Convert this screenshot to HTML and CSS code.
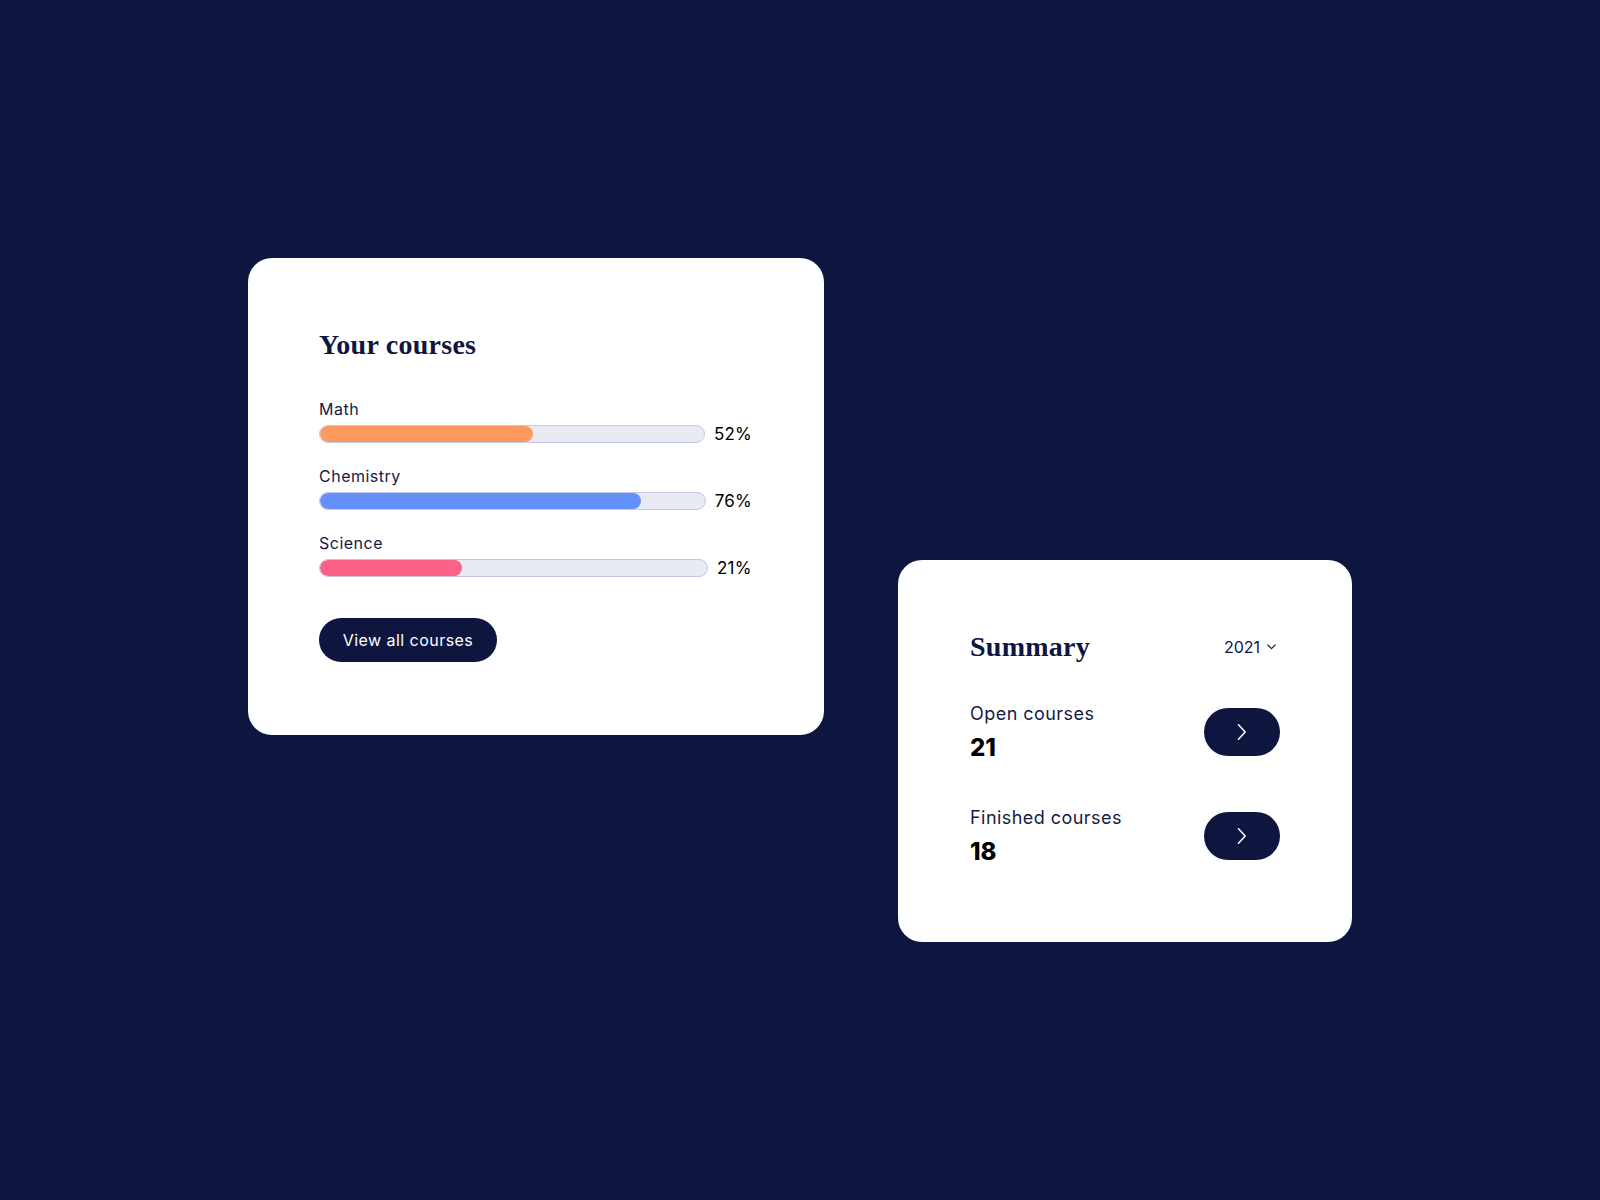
FILE: index.html
```html
<!DOCTYPE html>
<html lang="en">
<head>
<meta charset="utf-8">
<title>Courses dashboard</title>
<link rel="stylesheet" href="styles.css">
</head>
<body>
<main class="canvas">
  <section class="card courses">
    <h2 class="card-title">Your courses</h2>
    <ul class="course-list">
      <li class="course">
        <span class="course-name">Math</span>
        <div class="progress-row">
          <div class="track"><div class="fill fill-orange" style="width:213px"></div></div>
          <span class="pct">52%</span>
        </div>
      </li>
      <li class="course">
        <span class="course-name">Chemistry</span>
        <div class="progress-row">
          <div class="track"><div class="fill fill-blue" style="width:321px"></div></div>
          <span class="pct">76%</span>
        </div>
      </li>
      <li class="course">
        <span class="course-name">Science</span>
        <div class="progress-row">
          <div class="track"><div class="fill fill-pink" style="width:142px"></div></div>
          <span class="pct">21%</span>
        </div>
      </li>
    </ul>
    <button class="btn-primary" type="button">View all courses</button>
  </section>

  <section class="card summary">
    <header class="summary-head">
      <h2 class="card-title">Summary</h2>
      <button class="year-select" type="button">2021
        <svg class="year-chev" width="9" height="6" viewBox="0 0 9 6" aria-hidden="true"><path d="M0.8 1 L4.5 4.6 L8.2 1" fill="none" stroke="#0e1640" stroke-width="1.1" stroke-linecap="round" stroke-linejoin="round"/></svg>
      </button>
    </header>
    <div class="stat-row">
      <div class="stat">
        <span class="stat-label">Open courses</span>
        <span class="stat-value">21</span>
      </div>
      <button class="btn-arrow" type="button" aria-label="Open courses">
        <svg width="10" height="16" viewBox="0 0 10 16" aria-hidden="true"><path d="M1.5 0.8 L8.2 8 L1.5 15.2" fill="none" stroke="#ffffff" stroke-width="1.5" stroke-linecap="round" stroke-linejoin="round"/></svg>
      </button>
    </div>
    <div class="stat-row">
      <div class="stat">
        <span class="stat-label">Finished courses</span>
        <span class="stat-value">18</span>
      </div>
      <button class="btn-arrow" type="button" aria-label="Finished courses">
        <svg width="10" height="16" viewBox="0 0 10 16" aria-hidden="true"><path d="M1.5 0.8 L8.2 8 L1.5 15.2" fill="none" stroke="#ffffff" stroke-width="1.5" stroke-linecap="round" stroke-linejoin="round"/></svg>
      </button>
    </div>
  </section>
</main>
</body>
</html>
```

FILE: styles.css
```css
* { box-sizing: border-box; }

html, body {
  margin: 0;
  padding: 0;
  background: #0e1640;
}

body {
  width: 1600px;
  height: 1200px;
  font-family: Inter, "Noto Sans", "Liberation Sans", sans-serif;
  color: #141b45;
  overflow: hidden;
}

.canvas {
  display: flex;
  align-items: flex-start;
  gap: 74px;
  padding: 258px 0 0 248px;
}

.card {
  background: #ffffff;
  border-radius: 24px;
}

.card-title {
  margin: 0;
  font-family: "Liberation Serif", "DejaVu Serif", serif;
  font-weight: 700;
  font-size: 28px;
  line-height: 1.2;
  letter-spacing: 0.25px;
  color: #0e1640;
}

/* Courses card */
.courses {
  width: 576px;
  height: 477px;
  padding: 70px 72px 72px 71px;
}

.course-list {
  list-style: none;
  margin: 37px 0 0;
  padding: 0;
  display: flex;
  flex-direction: column;
  gap: 22px;
}

.course {
  display: flex;
  flex-direction: column;
  gap: 5px;
}

.course-name {
  font-size: 16px;
  line-height: 20px;
  letter-spacing: 0.5px;
  color: #141b45;
}

.progress-row {
  display: flex;
  align-items: center;
  gap: 9px;
  height: 20px;
}

.track {
  width: 389px;
  height: 18px;
  border: 1px solid #c3c8e5;
  border-radius: 9px;
  background: #e8eaf4;
  overflow: hidden;
  display: flex;
}

.fill {
  height: 100%;
  border-radius: 9px;
}
.fill-orange { background: #fe9a60; }
.fill-blue { background: #6390fa; }
.fill-pink { background: #fd6088; }

.pct {
  font-size: 17px;
  line-height: 20px;
  letter-spacing: 0.2px;
  color: #000000;
}

.btn-primary {
  margin-top: 40px;
  height: 44px;
  width: 178px;
  border: none;
  border-radius: 22px;
  background: #0e1640;
  color: #ffffff;
  font-family: inherit;
  font-size: 16px;
  letter-spacing: 0.45px;
  padding: 0;
  cursor: pointer;
}

/* Summary card */
.summary {
  margin-top: 302px;
  width: 454px;
  height: 382px;
  padding: 70px 72px 0 72px;
}

.summary-head {
  display: flex;
  align-items: center;
  justify-content: space-between;
  margin-bottom: 38px;
}

.year-select {
  display: flex;
  align-items: center;
  gap: 7px;
  margin-right: 4px;
  padding: 0;
  border: none;
  background: none;
  font-family: inherit;
  font-size: 16px;
  line-height: 20px;
  color: #0e1640;
}

.year-chev { margin-top: 1px; }

.stat-row {
  display: flex;
  align-items: center;
  justify-content: space-between;
  margin-bottom: 43px;
}

.stat {
  display: flex;
  flex-direction: column;
  gap: 7px;
}

.stat-label {
  font-size: 18px;
  line-height: 24px;
  letter-spacing: 0.45px;
  color: #141b45;
}

.stat-value {
  font-size: 24px;
  line-height: 30px;
  font-weight: 800;
  color: #000000;
}

.btn-arrow {
  width: 76px;
  height: 48px;
  border: none;
  border-radius: 24px;
  background: #0e1640;
  display: flex;
  align-items: center;
  justify-content: center;
  padding: 0;
  cursor: pointer;
}
```
